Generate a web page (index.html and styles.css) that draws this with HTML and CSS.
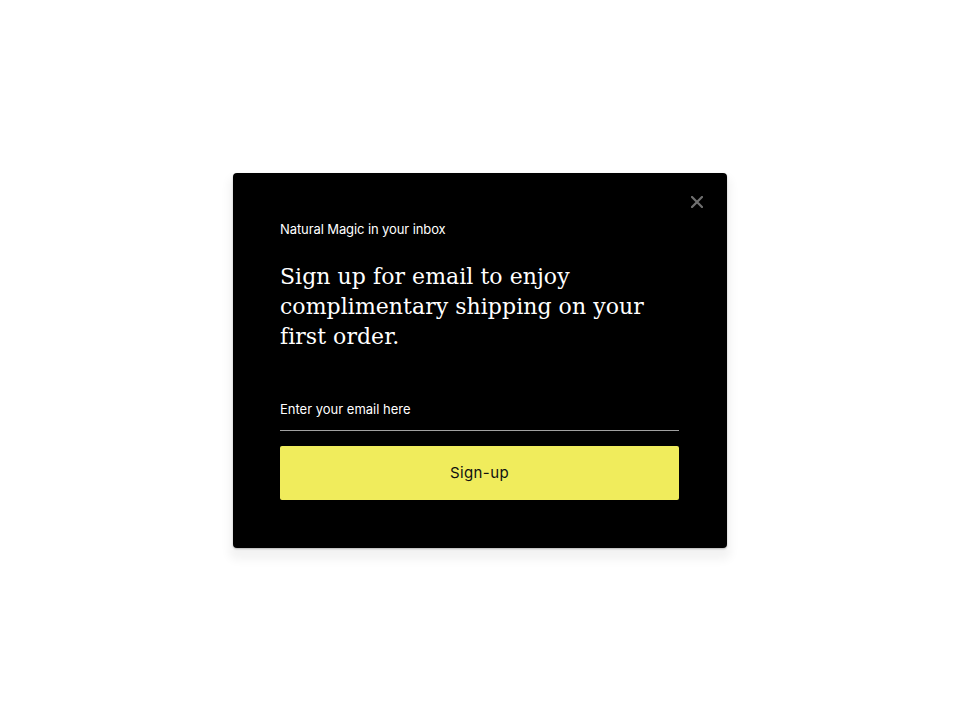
FILE: index.html
```html
<!DOCTYPE html>
<html lang="en">
<head>
<meta charset="utf-8">
<title>Sign up</title>
<link rel="stylesheet" href="styles.css">
</head>
<body>
<div class="page">
  <div class="modal">
    <button class="close" aria-label="Close">
      <svg width="12" height="12" viewBox="0 0 12 12"><path d="M1 1L11 11M11 1L1 11" stroke="#707070" stroke-width="2.2" stroke-linecap="square"/></svg>
    </button>
    <p class="eyebrow">Natural Magic in your inbox</p>
    <h1 class="title">Sign up for email to enjoy complimentary shipping on your first order.</h1>
    <div class="field">
      <span class="placeholder">Enter your email here</span>
    </div>
    <button class="submit">Sign-up</button>
  </div>
</div>
</body>
</html>
```
FILE: styles.css
```css
html, body {
  margin: 0;
  padding: 0;
  background: #ffffff;
}
.page {
  width: 960px;
  height: 720px;
  display: flex;
  align-items: center;
  justify-content: center;
}
.modal {
  position: relative;
  box-sizing: border-box;
  width: 494px;
  height: 375px;
  background: #000000;
  border-radius: 4px;
  padding: 48px 48px 48px 47px;
  box-shadow: 0 1px 2px rgba(0, 0, 0, 0.25), 0 8px 10px 4px rgba(0, 0, 0, 0.05);
  font-family: Inter, "Noto Sans", sans-serif;
  color: #ffffff;
}
.close {
  position: absolute;
  top: 22px;
  right: 23px;
  width: 14px;
  height: 14px;
  padding: 0;
  border: 0;
  background: transparent;
  display: flex;
  align-items: center;
  justify-content: center;
}
.eyebrow {
  margin: 0;
  font-size: 13px;
  line-height: 16px;
  letter-spacing: -0.1px;
}
.title {
  margin: 25px 0 0;
  font-family: "DejaVu Serif", "Liberation Serif", serif;
  font-weight: 400;
  font-size: 22px;
  line-height: 30px;
  letter-spacing: 0.05px;
}
.field {
  margin-top: 48px;
  padding-bottom: 12px;
  border-bottom: 1px solid #a0a0a0;
}
.placeholder {
  display: block;
  font-size: 13px;
  line-height: 18px;
  color: #ffffff;
}
.submit {
  display: block;
  width: 100%;
  height: 54px;
  margin-top: 15px;
  border: 0;
  border-radius: 2px;
  background: #f0ec5c;
  color: #111111;
  font-family: Inter, "Noto Sans", sans-serif;
  font-size: 15px;
  letter-spacing: 0.4px;
}
```
